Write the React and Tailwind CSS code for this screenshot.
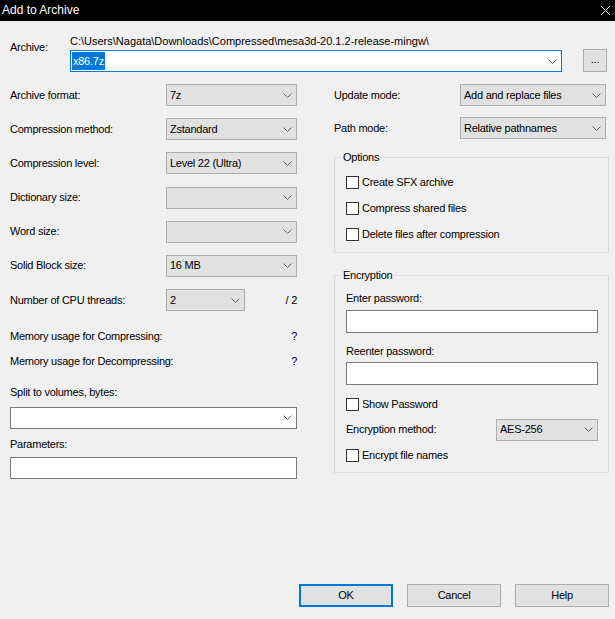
import React from 'react';

const Chevron = () => (
    <svg width="9" height="5" viewBox="0 0 9 5" className="block">
        <path d="M0.5 0.5 L4.5 4.5 L8.5 0.5" fill="none" stroke="#606060" strokeWidth="1" />
    </svg>
);

const Combo = ({ value, className = '' }) => (
    <div className={`flex items-center h-[22px] border border-[#adadad] bg-[#e1e1e1] pl-[3px] ${className}`}>
        <span className="flex-1 truncate">{value}</span>
        <span className="w-[18px] flex justify-center"><Chevron /></span>
    </div>
);

const Check = ({ label }) => (
    <div className="flex items-center h-[16px] gap-[3px]">
        <span className="w-[13px] h-[13px] border border-[#333333] bg-white" />
        <span>{label}</span>
    </div>
);

const Row = ({ label, value }) => (
    <div className="flex items-center h-[22px]">
        <span className="flex-1">{label}</span>
        <Combo value={value} className="w-[131px]" />
    </div>
);

const Group = ({ title, className = '', children }) => (
    <fieldset className={`border border-[#dcdcdc] p-0 ${className}`}>
        <legend className="ml-[6px] px-[2px] leading-[15px]">{title}</legend>
        {children}
    </fieldset>
);

const Btn = ({ label, primary }) => (
    <div className={`w-[94px] h-[23px] flex items-center justify-center bg-[#e1e1e1] ${primary ? 'border-2 border-[#0078d7]' : 'border border-[#adadad]'}`}>
        {label}
    </div>
);

export default function App() {
    return (
        <div className="w-[615px] h-[619px] bg-[#f0f0f0] flex flex-col text-black font-['Liberation_Sans',Arial,sans-serif] text-[11px] tracking-[-0.25px] leading-[15px]">
            {/* Title bar */}
            <div className="h-[21px] bg-black text-white flex items-center justify-between pl-[2px] pr-[5px] text-[12px] tracking-normal">
                <span>Add to Archive</span>
                <svg width="9" height="9" viewBox="0 0 9 9">
                    <path d="M0 0 L9 9 M9 0 L0 9" stroke="#ffffff" strokeWidth="1" />
                </svg>
            </div>

            <div className="flex-1 flex flex-col pl-[10px] pr-[6px]">
                {/* Archive path */}
                <div className="flex">
                    <span className="w-[60px] pt-[18.5px]">Archive:</span>
                    <div className="flex flex-col">
                        <span className="mt-[12.5px] tracking-[0px]">C:\Users\Nagata\Downloads\Compressed\mesa3d-20.1.2-release-mingw\</span>
                        <div className="flex items-start mt-[1.5px] gap-[21px]">
                            <div className="w-[492px] h-[22px] flex items-center border border-[#0078d7] bg-white pl-[1px]">
                                <span className="flex-1 flex">
                                    <span className="h-[18px] flex items-center bg-[#0078d7] text-white px-[1px]">x86.7z</span>
                                </span>
                                <span className="w-[18px] flex justify-center"><Chevron /></span>
                            </div>
                            <div className="w-[24px] h-[23px] -mt-[1px] flex items-end justify-center pb-[4px] border border-[#adadad] bg-[#e1e1e1]">...</div>
                        </div>
                    </div>
                </div>

                <div className="flex gap-[37px] mt-[12px]">
                    {/* Left column */}
                    <div className="w-[287px] flex flex-col">
                        <div className="flex flex-col gap-[12.2px]">
                            <Row label="Archive format:" value="7z" />
                            <Row label="Compression method:" value="Zstandard" />
                            <Row label="Compression level:" value="Level 22 (Ultra)" />
                            <Row label="Dictionary size:" value="" />
                            <Row label="Word size:" value="" />
                            <Row label="Solid Block size:" value="16 MB" />
                            <div className="flex items-center h-[22px]">
                                <span className="w-[156px]">Number of CPU threads:</span>
                                <Combo value="2" className="w-[79px]" />
                                <span className="flex-1 text-right">/ 2</span>
                            </div>
                        </div>
                        <div className="flex justify-between mt-[18px]">
                            <span>Memory usage for Compressing:</span>
                            <span>?</span>
                        </div>
                        <div className="flex justify-between mt-[10px]">
                            <span>Memory usage for Decompressing:</span>
                            <span>?</span>
                        </div>
                        <span className="mt-[16px]">Split to volumes, bytes:</span>
                        <div className="mt-[6.5px] h-[22px] flex items-center justify-end border border-[#7a7a7a] bg-white">
                            <span className="w-[18px] flex justify-center"><Chevron /></span>
                        </div>
                        <span className="mt-[8px]">Parameters:</span>
                        <div className="mt-[5.5px] h-[22px] border border-[#7a7a7a] bg-white" />
                    </div>

                    {/* Right column */}
                    <div className="w-[275px] flex flex-col">
                        <div className="flex items-center h-[22px] pr-[3px]">
                            <span className="flex-1">Update mode:</span>
                            <Combo value="Add and replace files" className="w-[146px]" />
                        </div>
                        <div className="flex items-center h-[22px] pr-[3px] mt-[11px]">
                            <span className="flex-1">Path mode:</span>
                            <Combo value="Relative pathnames" className="w-[146px]" />
                        </div>

                        <Group title="Options" className="mt-[10.5px]">
                            <div className="flex flex-col gap-[10px] pl-[11px] pt-[9.5px] pb-[10px]">
                                <Check label="Create SFX archive" />
                                <Check label="Compress shared files" />
                                <Check label="Delete files after compression" />
                            </div>
                        </Group>

                        <Group title="Encryption" className="mt-[14.5px]">
                            <div className="flex flex-col pl-[11px] pr-[10px] pt-[8px] pb-[9px]">
                                <span>Enter password:</span>
                                <div className="mt-[4.5px] h-[23px] border border-[#7a7a7a] bg-white" />
                                <span className="mt-[10.5px]">Reenter password:</span>
                                <div className="mt-[3.5px] h-[23px] border border-[#7a7a7a] bg-white" />
                                <div className="mt-[11px]"><Check label="Show Password" /></div>
                                <div className="mt-[7px] flex items-center h-[21px]">
                                    <span className="flex-1">Encryption method:</span>
                                    <Combo value="AES-256" className="w-[102px] h-[21px]" />
                                </div>
                                <div className="mt-[7px]"><Check label="Encrypt file names" /></div>
                            </div>
                        </Group>
                    </div>
                </div>

                <div className="flex-1" />

                {/* Buttons */}
                <div className="flex justify-end gap-[14px] pb-[12px]">
                    <Btn label="OK" primary />
                    <Btn label="Cancel" />
                    <Btn label="Help" />
                </div>
            </div>
        </div>
    );
}
